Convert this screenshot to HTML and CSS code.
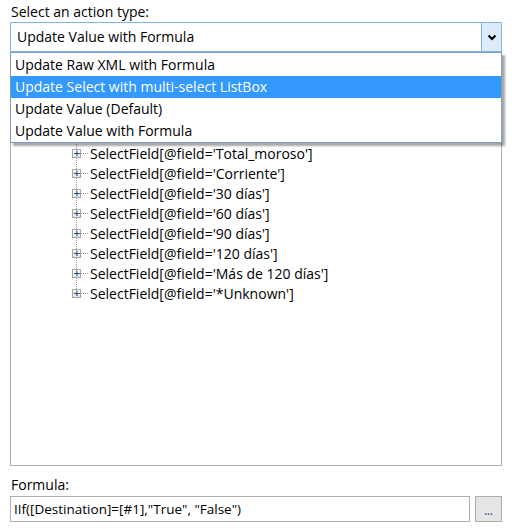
FILE: index.html
```html
<!DOCTYPE html>
<html lang="en">
<head>
	<meta charset="UTF-8">
	<title>Action type</title>
	<link rel="stylesheet" href="styles.css">
</head>
<body>
	<div class='dialog'>
		<div class='caption'>Select an action type:</div>
		<div class='combo-wrap'>
			<div class='combo'>
				<span class='combo-text'>Update Value with Formula</span>
				<span class='combo-btn'>
					<svg width="10" height="7" viewBox="0 0 10 7"><polyline points="1.5,1.5 5,5 8.5,1.5" fill="none" stroke="#000" stroke-width="2.2"/></svg>
				</span>
			</div>
			<ul class='droplist'>
				<li>Update Raw XML with Formula</li>
				<li class='selected'>Update Select with multi-select ListBox</li>
				<li>Update Value (Default)</li>
				<li>Update Value with Formula</li>
			</ul>
		</div>

		<div class='tree'>
			<div class='children'>
				<div class='node'><span class='exp'>+</span><span class='name'>SelectField[@field='Total_moroso']</span></div>
				<div class='node'><span class='exp'>+</span><span class='name'>SelectField[@field='Corriente']</span></div>
				<div class='node'><span class='exp'>+</span><span class='name'>SelectField[@field='30 días']</span></div>
				<div class='node'><span class='exp'>+</span><span class='name'>SelectField[@field='60 días']</span></div>
				<div class='node'><span class='exp'>+</span><span class='name'>SelectField[@field='90 días']</span></div>
				<div class='node'><span class='exp'>+</span><span class='name'>SelectField[@field='120 días']</span></div>
				<div class='node'><span class='exp'>+</span><span class='name'>SelectField[@field='Más de 120 días']</span></div>
				<div class='node'><span class='exp'>+</span><span class='name'>SelectField[@field='*Unknown']</span></div>
			</div>
		</div>

		<div class='caption formula-caption'>Formula:</div>
		<div class='formula-row'>
			<input type=text class='formula' value='IIf([Destination]=[#1],"True", "False")'>
			<button class='dots'>...</button>
		</div>
	</div>
</body>
</html>
```

FILE: styles.css
```css
*{
	box-sizing: border-box;
	margin: 0px;
	padding: 0px;
}

body{
	font-family: "Open Sans", "Noto Sans", sans-serif;
	font-size: 14px;
	color: #000;
	background: #fff;
}

.dialog{
	padding: 2px 10px 0 10px;
}

.caption{
	height: 20px;
	line-height: 20px;
	padding-left: 1px;
}

.combo-wrap{
	position: relative;
}

.combo{
	display: flex;
	height: 30px;
	border: 1px solid #7eb4ea;
	background: #fff;
}

.combo-text{
	flex: 1;
	line-height: 28px;
	padding-left: 6px;
}

.combo-btn{
	width: 20px;
	display: flex;
	align-items: center;
	justify-content: center;
	background: #dcecfc;
	border-left: 1px solid #7eb4ea;
}

/* opened list lies over the tree */
.droplist{
	position: absolute;
	top: 30px;
	left: 0;
	right: 0;
	list-style: none;
	background: #fff;
	border: 1px solid #7f9dc6;
	padding-top: 1px;
	box-shadow: 3px 3px 2px rgba(0,0,0,0.35);
	z-index: 2;
}

.droplist li{
	height: 22px;
	line-height: 22px;
	padding-left: 4px;
}

.droplist li.selected{
	background: #3399ff;
	color: #fff;
}

.tree{
	margin-top: 9px;
	height: 405px;
	border: 1px solid #abadb3;
	padding-top: 1px;
}

.children{
	position: relative;
	padding-top: 80px;
	padding-left: 61px;
}

.children::before{
	content: '';
	position: absolute;
	left: 65px;
	top: 0;
	bottom: 10px;
	border-left: 1px dotted #9a9a9a;
}

.node{
	display: flex;
	align-items: center;
	height: 20px;
}

.exp{
	position: relative;
	z-index: 1;
	width: 9px;
	height: 9px;
	border: 1px solid #a5a5a5;
	background: linear-gradient(#fff, #e4e4e4);
	font-family: "DejaVu Sans", sans-serif;
	font-size: 9px;
	font-weight: bold;
	line-height: 7px;
	text-align: center;
	color: #2a4a80;
	margin-right: 3px;
}

.name{
	position: relative;
	padding-left: 6px;
}

.name::before{
	content: '';
	position: absolute;
	left: -3px;
	width: 7px;
	top: 50%;
	border-top: 1px dotted #9a9a9a;
}

.formula-caption{
	margin-top: 9px;
}

.formula-row{
	display: flex;
	gap: 5px;
	margin-top: 1px;
}

.formula{
	flex: 1;
	height: 26px;
	border: 1px solid #abadb3;
	font-family: "Open Sans", "Noto Sans", sans-serif;
	font-size: 13.5px;
	padding-left: 3px;
	color: #000;
}

.dots{
	width: 27px;
	height: 26px;
	border: 1px solid #adadad;
	background: #e5e5e5;
	font-family: "Open Sans", sans-serif;
	font-size: 10px;
	font-weight: bold;
	color: #3c5a8c;
	line-height: 20px;
	padding-top: 4px;
}
```
